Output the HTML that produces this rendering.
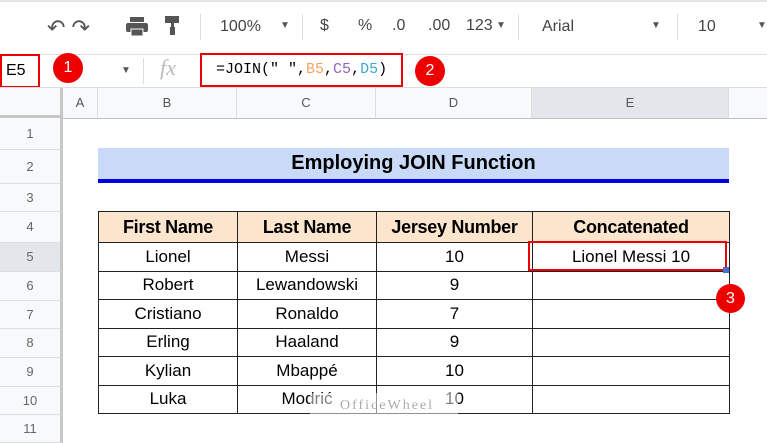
<!DOCTYPE html><html><head><style>
body{margin:0;width:767px;height:442px;overflow:hidden;background:#fff;font-family:"Liberation Sans",Arial,sans-serif;position:relative}
.a{position:absolute}
.tb{font-size:16px;color:#444}
.ch{position:absolute;top:88px;height:30px;background:#f8f9fa;border-right:1px solid #dadce0;border-bottom:1px solid #c0c0c0;font-size:13px;color:#555;text-align:center;line-height:30px}
.rh{position:absolute;left:0;width:60px;background:#f8f9fa;border-bottom:1px solid #dadce0;border-right:3px solid #c7c7c7;font-size:13px;color:#666;text-align:center}
table{position:absolute;left:98px;top:211px;width:631px;table-layout:fixed;border-collapse:collapse;font-size:17px}
td{border:1.5px solid #222;text-align:center;padding:0;height:27.5px;white-space:nowrap}
th{background:#fce5cd;border:1.5px solid #222;font-size:18px;height:30px;padding:0;white-space:nowrap;letter-spacing:-0.3px}
.c{position:absolute;border-radius:50%;background:#e00;color:#fff;text-align:center;font-size:16px}
</style></head><body>
<div class="a" style="left:0;top:0;width:767px;height:2px;background:#e6e6e6"></div>
<div class="a tb" style="left:47px;top:15px;font-size:22px;color:#555">↶ ↷</div>
<svg class="a" style="left:126px;top:17px" width="22" height="20"><rect x="4" y="0" width="14" height="5" fill="#555"/><rect x="0" y="6" width="22" height="9" rx="2" fill="#555"/><rect x="5" y="12" width="12" height="7" fill="#555" stroke="#fff"/></svg>
<svg class="a" style="left:165px;top:16px" width="16" height="20"><rect x="0" y="0" width="14" height="7" fill="#555"/><rect x="6" y="7" width="3" height="4" fill="#555"/><rect x="5" y="11" width="5" height="8" fill="#555"/></svg>
<div class="a" style="left:200px;top:14px;width:1px;height:26px;background:#ddd"></div>
<div class="a tb" style="left:220px;top:18px">100%</div><div class="a" style="left:280px;top:20px;font-size:10px;color:#555">▼</div>
<div class="a" style="left:302px;top:14px;width:1px;height:26px;background:#ddd"></div>
<div class="a tb" style="left:320px;top:17px">$</div><div class="a tb" style="left:358px;top:17px">%</div>
<div class="a tb" style="left:392px;top:17px">.0</div><div class="a tb" style="left:428px;top:17px">.00</div>
<div class="a tb" style="left:466px;top:17px">123</div><div class="a" style="left:496px;top:20px;font-size:10px;color:#555">▼</div>
<div class="a" style="left:518px;top:14px;width:1px;height:26px;background:#ddd"></div>
<div class="a tb" style="left:542px;top:18px">Arial</div><div class="a" style="left:651px;top:20px;font-size:10px;color:#555">▼</div>
<div class="a" style="left:677px;top:14px;width:1px;height:26px;background:#ddd"></div>
<div class="a tb" style="left:698px;top:18px">10</div><div class="a" style="left:757px;top:20px;font-size:10px;color:#555">▼</div>
<div class="a" style="left:0;top:54px;width:767px;height:1px;background:#e0e0e0"></div>
<div class="a" style="left:0;top:54px;height:30px;border:2.5px solid #e00;font-size:16px;line-height:30px;padding-left:4px;width:32px">E5</div>
<div class="c" style="left:53px;top:53px;width:30px;height:30px;line-height:30px">1</div>
<div class="a" style="left:121px;top:65px;font-size:10px;color:#555">▼</div>
<div class="a" style="left:143px;top:58px;width:1px;height:26px;background:#ddd"></div>
<div class="a" style="left:160px;top:55px;font-family:'Liberation Serif',serif;font-style:italic;font-size:22px;color:#bbb">fx</div>
<div class="a" style="left:200px;top:53px;height:30px;border:2.5px solid #e00;font-family:'Liberation Mono',monospace;font-size:15px;line-height:30px;padding-left:14px;width:185px">=JOIN(" ",<span style="color:#f4a460">B5</span>,<span style="color:#9467bd">C5</span>,<span style="color:#3fa9d8">D5</span>)</div>
<div class="c" style="left:415px;top:56px;width:30px;height:30px;line-height:30px">2</div>
<div class="a" style="left:0;top:87px;width:767px;height:1px;background:#ddd"></div>
<div class="a" style="left:0;top:88px;height:30px;background:#f8f9fa;border-right:3px solid #c7c7c7;border-bottom:3px solid #c7c7c7;box-sizing:border-box;width:63px"></div>
<div class="ch" style="left:63px;width:34px">A</div><div class="ch" style="left:98px;width:138px">B</div><div class="ch" style="left:237px;width:138px">C</div><div class="ch" style="left:376px;width:155px">D</div><div class="ch" style="left:532px;width:196px;background:#e3e6ea">E</div><div class="ch" style="left:729px;width:40px"></div>
<div class="rh" style="top:118px;height:31px;line-height:31px">1</div>
<div class="rh" style="top:150px;height:33px;line-height:33px">2</div>
<div class="rh" style="top:184px;height:27px;line-height:27px">3</div>
<div class="rh" style="top:212px;height:30px;line-height:30px">4</div>
<div class="rh" style="top:243px;height:28px;line-height:28px;background:#e3e6ea">5</div>
<div class="rh" style="top:272px;height:28px;line-height:28px">6</div>
<div class="rh" style="top:301px;height:27px;line-height:27px">7</div>
<div class="rh" style="top:329px;height:28px;line-height:28px">8</div>
<div class="rh" style="top:358px;height:28px;line-height:28px">9</div>
<div class="rh" style="top:387px;height:27px;line-height:27px">10</div>
<div class="rh" style="top:415px;height:27px;line-height:27px">11</div>
<div class="a" style="left:98px;top:148px;width:631px;height:31px;background:#c9daf8;font-size:20px;font-weight:bold;text-align:center;line-height:31px">Employing JOIN Function</div>
<div class="a" style="left:98px;top:179px;width:631px;height:4px;background:#0000e0"></div>
<table><colgroup><col style="width:139px"><col style="width:139px"><col style="width:156px"><col style="width:197px"></colgroup>
<tr><th>First Name</th><th>Last Name</th><th>Jersey Number</th><th>Concatenated</th></tr>
<tr><td>Lionel</td><td>Messi</td><td>10</td><td>Lionel Messi 10</td></tr>
<tr><td>Robert</td><td>Lewandowski</td><td>9</td><td></td></tr>
<tr><td>Cristiano</td><td>Ronaldo</td><td>7</td><td></td></tr>
<tr><td>Erling</td><td>Haaland</td><td>9</td><td></td></tr>
<tr><td>Kylian</td><td>Mbappé</td><td>10</td><td></td></tr>
<tr><td>Luka</td><td>Modrić</td><td>10</td><td></td></tr></table>
<div class="a" style="left:528px;top:241px;width:195px;height:26px;border:2.5px solid #e00"></div>
<div class="a" style="left:723px;top:267px;width:6px;height:6px;background:#4a6fd0"></div>
<div class="c" style="left:716px;top:284px;width:29px;height:29px;line-height:29px">3</div>
<div class="a" style="left:310px;top:393px;width:148px;height:26px;background:rgba(255,255,255,.5);font-family:'Liberation Serif',serif;color:#aaa;font-size:14px;letter-spacing:2px;line-height:26px;padding-left:30px;box-sizing:border-box">OfficeWheel</div>
</body></html>
